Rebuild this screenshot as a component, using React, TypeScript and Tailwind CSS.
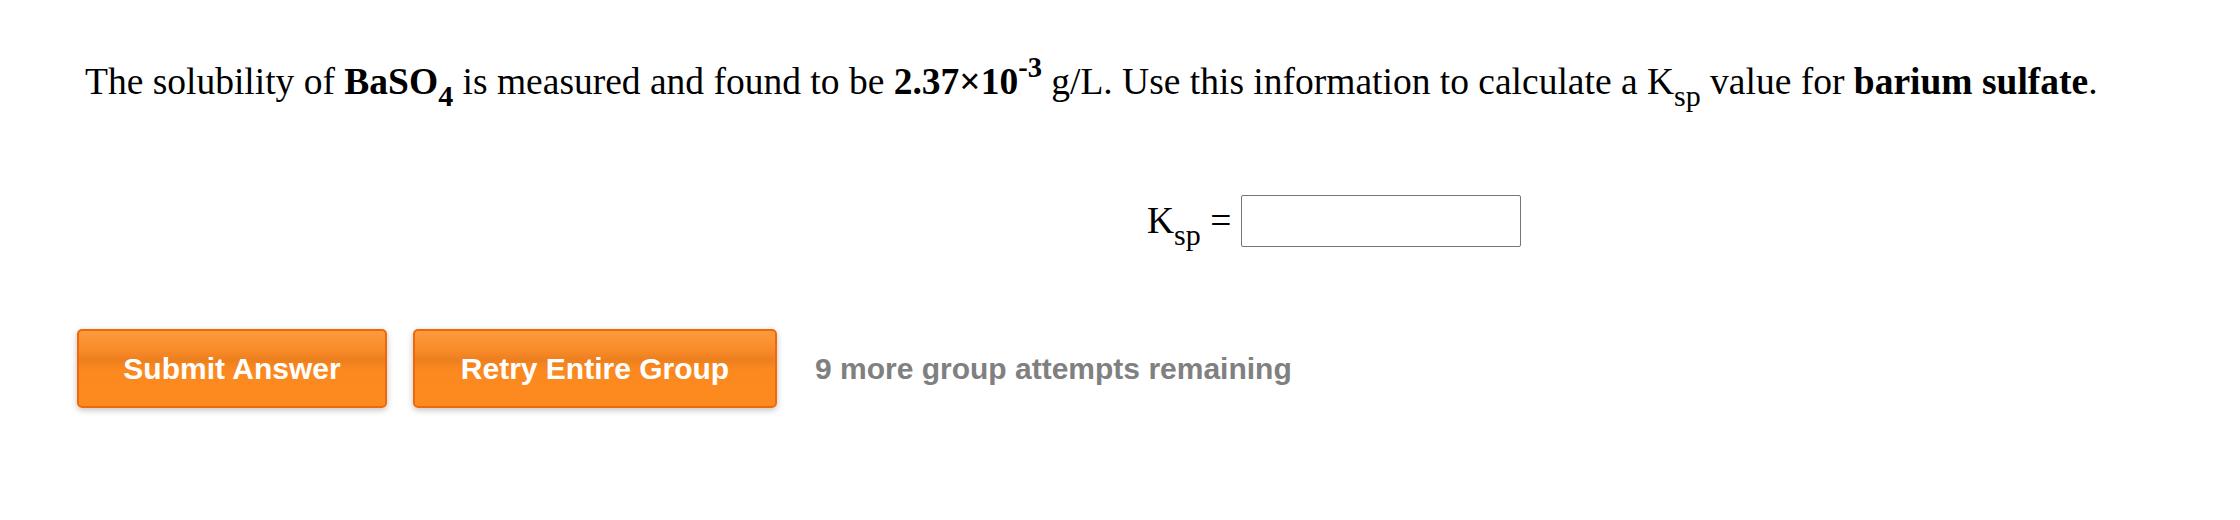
import React from "react";

const serif = { fontFamily: '"Liberation Serif", "Times New Roman", serif' };
const sans = { fontFamily: '"Liberation Sans", Arial, sans-serif' };

function Sub({ children }: { children: React.ReactNode }) {
  return (
    <sub className="text-[0.8em] bottom-[-0.4em]" style={serif}>
      {children}
    </sub>
  );
}

function OrangeButton({ label, width }: { label: string; width: string }) {
  return (
    <button
      className={`${width} h-[79px] rounded-[5px] border-2 border-[#f0680c] text-white font-bold text-[30px] shadow-[0_2px_6px_rgba(0,0,0,0.25)] bg-[linear-gradient(to_bottom,#fd9a3c_0%,#f98b2a_25%,#ec7f1e_38%,#fc891f_52%,#fd8a1f_100%)]`}
      style={sans}
    >
      {label}
    </button>
  );
}

export default function App() {
  return (
    <div className="w-[2240px] h-[520px] bg-white text-black">
      <div className="pt-[60px] pl-[85px] text-[37.5px] leading-[1.15]" style={serif}>
        The solubility of{" "}
        <b>
          BaSO<Sub>4</Sub>
        </b>{" "}
        is measured and found to be{" "}
        <b>
          2.37×10<sup className="text-[0.76em] top-[-0.58em]">-3</sup>
        </b>{" "}
        g/L. Use this information to calculate a K<Sub>sp</Sub> value for{" "}
        <b>barium sulfate</b>.
      </div>

      <div className="flex items-center pl-[1147px] mt-[92px]" style={serif}>
        <span className="text-[37.5px] leading-none">
          K<Sub>sp</Sub> =
        </span>
        <input
          type="text"
          className="ml-[10px] w-[280px] h-[52px] border border-[#767676] rounded-[2px] outline-none"
        />
      </div>

      <div className="flex items-center pl-[77px] mt-[82px]">
        <OrangeButton label="Submit Answer" width="w-[310px]" />
        <div className="w-[26px]" />
        <OrangeButton label="Retry Entire Group" width="w-[364px]" />
        <span className="ml-[38px] text-[30px] font-bold text-[#808080]" style={sans}>
          9 more group attempts remaining
        </span>
      </div>
    </div>
  );
}
